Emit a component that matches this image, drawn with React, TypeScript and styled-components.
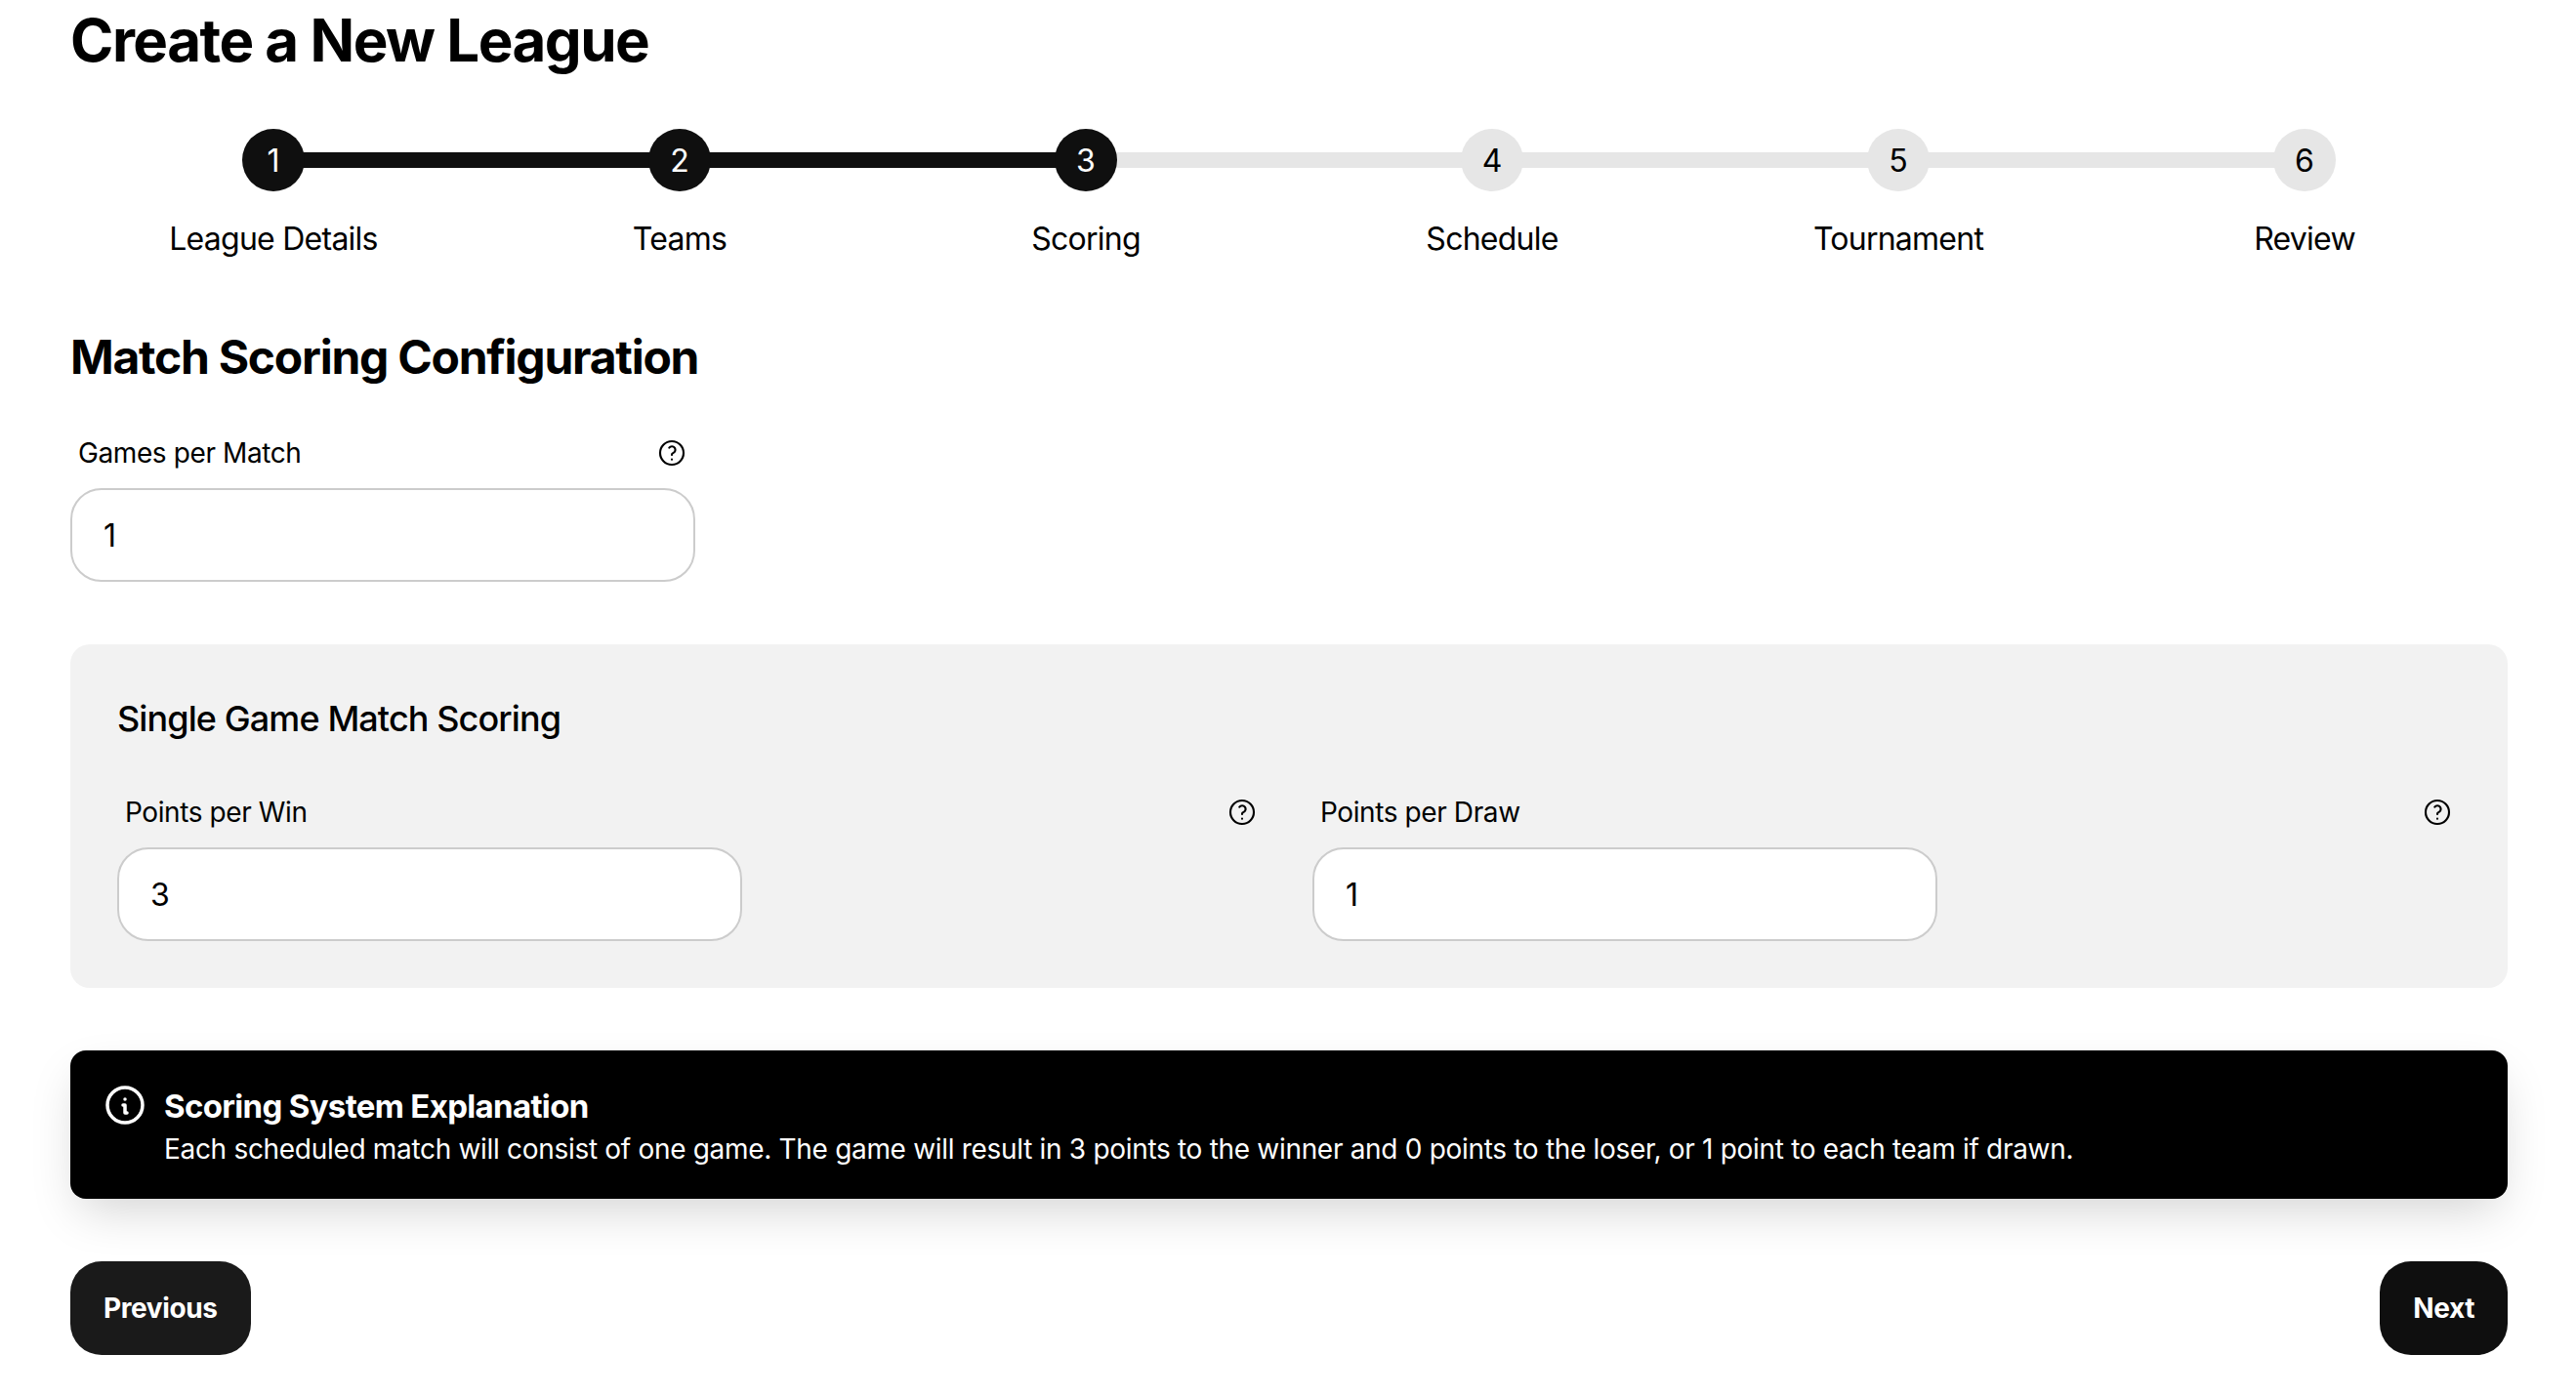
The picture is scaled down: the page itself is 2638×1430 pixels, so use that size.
import styled, { createGlobalStyle } from 'styled-components';
import { TbInfoCircle } from 'react-icons/tb';

const steps = ['League Details', 'Teams', 'Scoring', 'Schedule', 'Tournament', 'Review'];
const currentStep = 2;

const GlobalStyle = createGlobalStyle`
  * {
    box-sizing: border-box;
  }
  body {
    margin: 0;
    background: #fff;
    color: #000;
    font-family: Inter, 'Liberation Sans', sans-serif;
  }
`;

const HelpIcon = () => (
  <svg width='32' height='32' viewBox='0 0 24 24' fill='none' stroke='currentColor' strokeWidth='1.6' strokeLinecap='round' strokeLinejoin='round'>
    <path d='M12 12m-9 0a9 9 0 1 0 18 0a9 9 0 1 0 -18 0' />
    <path d='M12 17l0 .01' />
    <path d='M12 13.5a1.5 1.5 0 0 1 1 -1.5a2.6 2.6 0 1 0 -3 -4' />
  </svg>
);

interface FieldProps {
  label: string;
  value: string;
}

const Field: React.FC<FieldProps> = ({ label, value }: FieldProps) => {
  return (
    <div>
      <LabelRow>
        <span>{label}</span>
        <HelpIcon />
      </LabelRow>
      <ValueInput readOnly value={value} />
    </div>
  );
};

export default function App() {
  return (
    <Page>
      <GlobalStyle />
      <Title>Create a New League</Title>
      <Stepper>
        {steps.map((name, i) => (
          <Step key={name} $done={i < currentStep} $last={i === steps.length - 1}>
            <Bullet $active={i <= currentStep}>{i + 1}</Bullet>
            <StepName>{name}</StepName>
          </Step>
        ))}
      </Stepper>
      <SectionTitle>Match Scoring Configuration</SectionTitle>
      <GamesField>
        <Field label='Games per Match' value='1' />
      </GamesField>
      <Panel>
        <PanelTitle>Single Game Match Scoring</PanelTitle>
        <FieldGrid>
          <Field label='Points per Win' value='3' />
          <Field label='Points per Draw' value='1' />
        </FieldGrid>
      </Panel>
      <Notice>
        <NoticeIcon size={48} strokeWidth={1.75} />
        <div>
          <NoticeTitle>Scoring System Explanation</NoticeTitle>
          <NoticeText>
            Each scheduled match will consist of one game. The game will result in 3 points to the winner and 0 points
            to the loser, or 1 point to each team if drawn.
          </NoticeText>
        </div>
      </Notice>
      <Footer>
        <NavButton $tone='#1a1a1a'>Previous</NavButton>
        <NavButton $tone='#0f0f0f'>Next</NavButton>
      </Footer>
    </Page>
  );
}

const Page = styled.div`
  padding: 0 70px 42px 72px;
`;

const Title = styled.h1`
  margin: 0;
  padding-top: 2px;
  font-size: 60px;
  line-height: 78px;
  font-weight: 700;
  letter-spacing: -1.5px;
`;

const Stepper = styled.div`
  display: grid;
  grid-template-columns: repeat(6, 1fr);
  margin-top: 52px;
`;

const Step = styled.div<{ $done: boolean; $last: boolean }>`
  position: relative;
  display: flex;
  flex-direction: column;
  align-items: center;
  &::before {
    content: '';
    display: ${(p) => (p.$last ? 'none' : 'block')};
    position: absolute;
    top: 24px;
    left: 50%;
    width: 100%;
    height: 16px;
    background: ${(p) => (p.$done ? '#0f0f0f' : '#e6e6e6')};
  }
`;

const Bullet = styled.div<{ $active: boolean }>`
  position: relative;
  width: 64px;
  height: 64px;
  border-radius: 50%;
  display: flex;
  align-items: center;
  justify-content: center;
  font-size: 32px;
  background: ${(p) => (p.$active ? '#0f0f0f' : '#e6e6e6')};
  color: ${(p) => (p.$active ? '#fff' : '#000')};
`;

const StepName = styled.div`
  margin-top: 25px;
  font-size: 32px;
  line-height: 48px;
  letter-spacing: -0.75px;
`;

const SectionTitle = styled.h2`
  margin: 65px 0 0;
  font-size: 48px;
  line-height: 63px;
  font-weight: 700;
  letter-spacing: -1.25px;
`;

const GamesField = styled.div`
  width: 640px;
  margin-top: 47px;
`;

const LabelRow = styled.div`
  display: flex;
  align-items: center;
  justify-content: space-between;
  padding: 0 8px;
  height: 40px;
  margin-bottom: 16px;
  font-size: 28px;
  line-height: 40px;
  letter-spacing: -0.4px;
`;

const ValueInput = styled.input`
  display: block;
  width: 640px;
  height: 96px;
  padding: 0 32px;
  border: 2px solid #cccccc;
  border-radius: 32px;
  background: #fff;
  color: #000;
  font-family: inherit;
  font-size: 32px;
  outline: none;
`;

const Panel = styled.section`
  margin-top: 64px;
  padding: 50px 48px 48px;
  border-radius: 20px;
  background: #f2f2f2;
`;

const PanelTitle = styled.h3`
  margin: 0;
  font-size: 36px;
  line-height: 52px;
  font-weight: 500;
  letter-spacing: -0.9px;
`;

const FieldGrid = styled.div`
  display: grid;
  grid-template-columns: 1fr 1fr;
  gap: 48px;
  margin-top: 50px;
`;

const Notice = styled.section`
  display: flex;
  gap: 16px;
  margin-top: 64px;
  padding: 35px 32px 29px;
  border-radius: 16px;
  background: #000;
  color: #fff;
  box-shadow: 0 20px 50px -10px rgba(0, 0, 0, 0.18);
`;

const NoticeIcon = styled(TbInfoCircle)`
  flex: none;
  margin-top: -3px;
`;

const NoticeTitle = styled.div`
  font-size: 33px;
  line-height: 44px;
  font-weight: 700;
  letter-spacing: -0.67px;
`;

const NoticeText = styled.div`
  font-size: 28px;
  line-height: 44px;
  letter-spacing: -0.31px;
`;

const Footer = styled.div`
  display: flex;
  justify-content: space-between;
  margin-top: 64px;
`;

const NavButton = styled.button<{ $tone: string }>`
  height: 96px;
  padding: 0 34px;
  border: none;
  border-radius: 32px;
  background: ${(p) => p.$tone};
  color: #fff;
  font-family: inherit;
  font-size: 28px;
  font-weight: 700;
  letter-spacing: -0.4px;
`;
